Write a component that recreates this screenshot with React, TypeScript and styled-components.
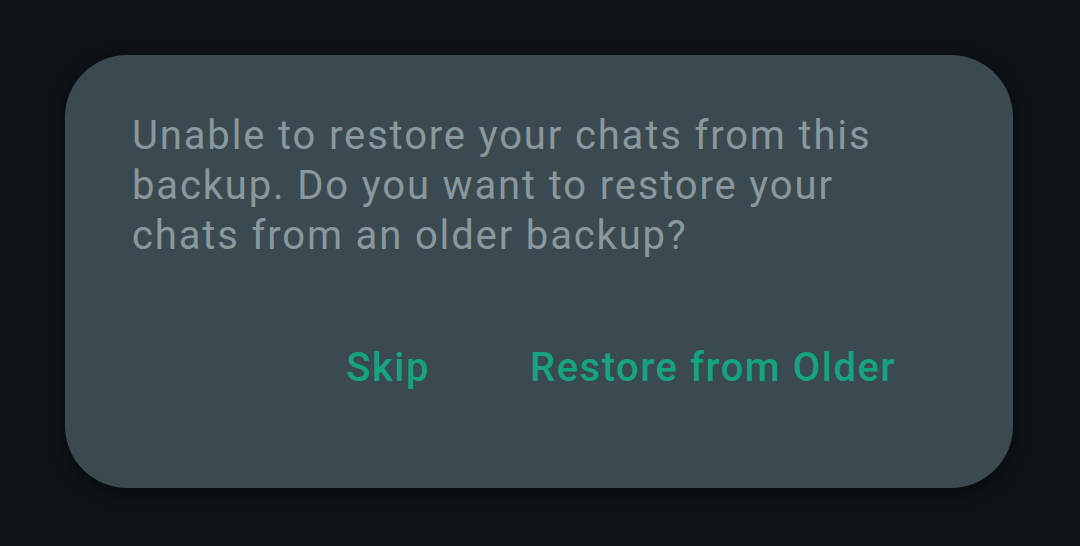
import * as React from "react";
import styled, { createGlobalStyle } from "styled-components";

const GlobalStyle = createGlobalStyle`
  html, body {
    margin: 0;
    padding: 0;
    background: #0e1318;
  }
  body {
    font-family: Roboto, "Noto Sans", sans-serif;
  }
`;

const Screen = styled.div`
  width: 1080px;
  height: 546px;
  box-sizing: border-box;
  padding: 55px 67px 58px 65px;
  background: #0e1318;
`;

const Dialog = styled.div`
  height: 100%;
  box-sizing: border-box;
  display: flex;
  flex-direction: column;
  background: #3b4a50;
  border-radius: 62px;
  box-shadow: 0 4px 18px rgba(0, 0, 0, 0.45);
  padding: 56px 60px 0 67px;
`;

const Message = styled.p`
  margin: 0;
  font-size: 40px;
  line-height: 50px;
  color: #8a989d;
  letter-spacing: 1.85px;
`;

const Actions = styled.div`
  display: flex;
  justify-content: flex-end;
  align-items: center;
  gap: 100px;
  margin-top: 82px;
  padding-right: 57px;
`;

const ActionButton = styled.button`
  border: none;
  background: none;
  padding: 0;
  font-family: Roboto, "Noto Sans", sans-serif;
  font-weight: 500;
  font-size: 40px;
  line-height: 50px;
  letter-spacing: 1.5px;
  color: #15a47f;
  cursor: pointer;
`;

export default function App() {
  return (
    <>
      <GlobalStyle />
      <Screen>
        <Dialog>
          <Message>
            Unable to restore your chats from this
            <br />
            backup. Do you want to restore your
            <br />
            chats from an older backup?
          </Message>
          <Actions>
            <ActionButton>Skip</ActionButton>
            <ActionButton>Restore from Older</ActionButton>
          </Actions>
        </Dialog>
      </Screen>
    </>
  );
}
